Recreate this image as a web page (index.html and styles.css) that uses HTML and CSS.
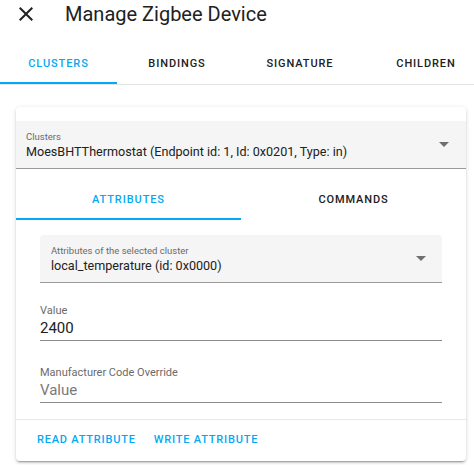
FILE: index.html
```html
<!DOCTYPE html>
<html>
<head>
<meta charset="utf-8">
<link rel="stylesheet" href="styles.css">
</head>
<body>
<div class="dialog">
  <div class="header">
    <svg class="close" viewBox="0 0 24 24" width="24" height="24"><path d="M19,6.41L17.59,5L12,10.59L6.41,5L5,6.41L10.59,12L5,17.59L6.41,19L12,13.41L17.59,19L19,17.59L13.41,12L19,6.41Z"/></svg>
    <div class="title">Manage Zigbee Device</div>
  </div>
  <div class="tabs">
    <div class="tab active t1">CLUSTERS</div>
    <div class="tab t2">BINDINGS</div>
    <div class="tab t3">SIGNATURE</div>
    <div class="tab t4">CHILDREN</div>
  </div>
  <div class="card">
    <div class="select wide">
      <div class="sel-text">
        <div class="label">Clusters</div>
        <div class="value">MoesBHTThermostat (Endpoint id: 1, Id: 0x0201, Type: in)</div>
      </div>
      <span class="arrow"></span>
    </div>
    <div class="subtabs">
      <div class="subtab active">ATTRIBUTES</div>
      <div class="subtab">COMMANDS</div>
    </div>
    <div class="content">
      <div class="select">
        <div class="sel-text">
          <div class="label">Attributes of the selected cluster</div>
          <div class="value">local_temperature (id: 0x0000)</div>
        </div>
        <span class="arrow"></span>
      </div>
      <div class="field f-value">
        <div class="label">Value</div>
        <div class="value">2400</div>
      </div>
      <div class="field f-manu">
        <div class="label">Manufacturer Code Override</div>
        <div class="value placeholder">Value</div>
      </div>
    </div>
    <div class="actions">
      <span class="btn">READ ATTRIBUTE</span>
      <span class="btn">WRITE ATTRIBUTE</span>
    </div>
  </div>
</div>
</body>
</html>
```

FILE: styles.css
```css
html, body {
  margin: 0;
  padding: 0;
  background: #ffffff;
  overflow: hidden;
}
body {
  font-family: Roboto, "Noto Sans", sans-serif;
  color: #212121;
  width: 474px;
  height: 465px;
}
.dialog {
  display: flex;
  flex-direction: column;
}
.header {
  display: flex;
  align-items: center;
  height: 28px;
  padding-left: 14px;
  gap: 27px;
}
.close {
  fill: #212121;
  flex: none;
}
.title {
  font-size: 20px;
  line-height: 28px;
  color: #212121;
}
.tabs {
  display: flex;
  height: 46px;
  margin-top: 10px;
  border-bottom: 1px solid #e4e4e4;
  overflow: hidden;
}
.tab {
  flex: none;
  display: flex;
  align-items: center;
  justify-content: center;
  font-size: 11px;
  font-weight: 500;
  letter-spacing: 0.9px;
  color: #212121;
  box-sizing: border-box;
  padding-top: 5px;
}
.t1 { width: 117px; }
.t2 { width: 120px; }
.t3 { width: 126px; }
.t4 { width: 126px; }
.tab.active {
  color: #03a9f4;
  border-bottom: 2px solid #03a9f4;
  padding-top: 7px;
}
.card {
  margin: 22px 8px 0 16px;
  border-radius: 4px;
  box-shadow: 0 2px 2px 0 rgba(0,0,0,0.14), 0 1px 5px 0 rgba(0,0,0,0.12), 0 3px 1px -2px rgba(0,0,0,0.2);
  padding-top: 14px;
  background: #fff;
}
.select {
  display: flex;
  align-items: center;
  height: 48px;
  box-sizing: border-box;
  background: #f5f5f5;
  border-bottom: 1px solid #9a9a9a;
  padding: 0 16px 0 11px;
  border-radius: 4px 4px 0 0;
}
.select.wide {
  border-radius: 0;
  padding-left: 10px;
  padding-right: 17px;
}
.sel-text {
  flex: 1;
  display: flex;
  flex-direction: column;
  padding-top: 2px;
}
.label {
  font-size: 9.5px;
  line-height: 13px;
  color: #6b6b6b;
}
.value {
  font-size: 12.6px;
  line-height: 18px;
  color: #212121;
}
.arrow {
  width: 0;
  height: 0;
  border-left: 5px solid transparent;
  border-right: 5px solid transparent;
  border-top: 5px solid #6f6f6f;
}
.subtabs {
  display: flex;
  height: 51px;
}
.subtab {
  flex: 1;
  display: flex;
  align-items: center;
  justify-content: center;
  font-size: 11px;
  font-weight: 500;
  letter-spacing: 0.9px;
  color: #212121;
  box-sizing: border-box;
  padding-top: 10px;
}
.subtab.active {
  color: #03a9f4;
  border-bottom: 2px solid #03a9f4;
  padding-top: 12px;
}
.content {
  padding: 15px 24px 16px 24px;
  display: flex;
  flex-direction: column;
}
.field {
  display: flex;
  flex-direction: column;
  border-bottom: 1px solid #8c8c8c;
  padding-bottom: 3px;
}
.f-value { margin-top: 21px; }
.f-manu { margin-top: 25px; }
.field .label {
  font-size: 11px;
  margin-bottom: 2px;
}
.field .value {
  font-size: 15px;
}
.placeholder {
  color: #7a7a7a;
}
.actions {
  border-top: 1px solid #e8e8e8;
  display: flex;
  gap: 18px;
  padding: 13px 0 15px 21px;
}
.btn {
  font-size: 11px;
  font-weight: 500;
  letter-spacing: 0.8px;
  color: #03a9f4;
}
```
